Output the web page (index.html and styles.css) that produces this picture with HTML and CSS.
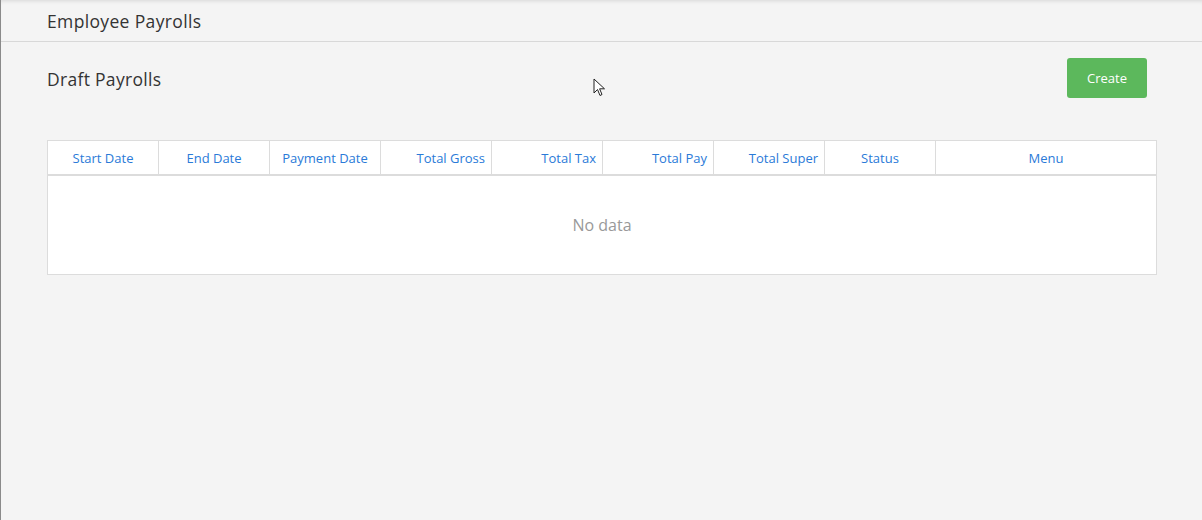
FILE: index.html
```html
<!DOCTYPE html>
<html lang="en">
<head>
    <meta charset="UTF-8">
    <title>Employee Payrolls</title>
    <link rel="stylesheet" href="styles.css">
</head>
<body>
    <div class="page">
        <header class="topbar">
            <h1>Employee Payrolls</h1>
        </header>
        <main class="content">
            <div class="section-head">
                <h2>Draft Payrolls</h2>
                <button class="btn-create">Create</button>
            </div>
            <table class="grid">
                <thead>
                    <tr>
                        <th class="center">Start Date</th>
                        <th class="center">End Date</th>
                        <th class="center">Payment Date</th>
                        <th class="right">Total Gross</th>
                        <th class="right">Total Tax</th>
                        <th class="right">Total Pay</th>
                        <th class="right">Total Super</th>
                        <th class="center">Status</th>
                        <th class="center menu">Menu</th>
                    </tr>
                </thead>
                <tbody>
                    <tr>
                        <td colspan="9" class="empty">No data</td>
                    </tr>
                </tbody>
            </table>
        </main>
        <svg class="cursor" width="14" height="20" viewBox="0 0 14 20">
            <path d="M1 1 L1 15 L4.5 11.5 L7 17.5 L9 16.5 L6.6 10.8 L11.5 10.8 Z" fill="#fff" stroke="#222" stroke-width="1"/>
        </svg>
    </div>
</body>
</html>
```

FILE: styles.css
```css
html, body {
    margin: 0;
    padding: 0;
    height: 100%;
}
body {
    background: #f4f4f4;
    font-family: 'Open Sans', Arial, sans-serif;
    color: #333;
}
.page {
    position: relative;
    min-height: 100%;
    border-left: 1px solid #8a8a8a;
    box-sizing: border-box;
}
.topbar {
    height: 42px;
    border-bottom: 1px solid #d8d8d8;
    box-shadow: inset 0 4px 4px -3px rgba(0,0,0,0.12);
    display: flex;
    align-items: center;
    padding: 1px 46px 0 46px;
    box-sizing: border-box;
}
h1 {
    margin: 0;
    font-size: 17.5px;
    letter-spacing: 0.35px;
    font-weight: 500;
    color: #333;
}
.content {
    padding: 16px 45px 0 46px;
}
.section-head {
    display: flex;
    align-items: center;
    justify-content: space-between;
    height: 40px;
    padding-right: 10px;
}
h2 {
    margin: 0;
    padding-top: 2px;
    font-size: 17.5px;
    letter-spacing: 0.3px;
    font-weight: 500;
    color: #333;
}
.btn-create {
    width: 80px;
    height: 40px;
    background: #5cb85c;
    color: #fff;
    border: none;
    border-radius: 3px;
    font-family: 'Open Sans', Arial, sans-serif;
    font-size: 13px;
    cursor: pointer;
}
.grid {
    margin-top: 42px;
    width: 100%;
    border-collapse: collapse;
    background: #fff;
    border: 1px solid #dcdcdc;
    table-layout: fixed;
}
.grid th {
    width: 111px;
    height: 34px;
    padding: 1px 6px 0 6px;
    box-sizing: border-box;
    font-weight: normal;
    font-size: 13px;
    color: #2a7ad8;
    border-right: 1px solid #dcdcdc;
    border-bottom: 2px solid #dcdcdc;
}
.grid th.menu {
    width: auto;
    border-right: none;
}
.center {
    text-align: center;
}
.right {
    text-align: right;
}
.empty {
    height: 96px;
    text-align: center;
    color: #999;
    font-size: 16px;
}
.cursor {
    position: absolute;
    left: 592px;
    top: 78px;
}
```
